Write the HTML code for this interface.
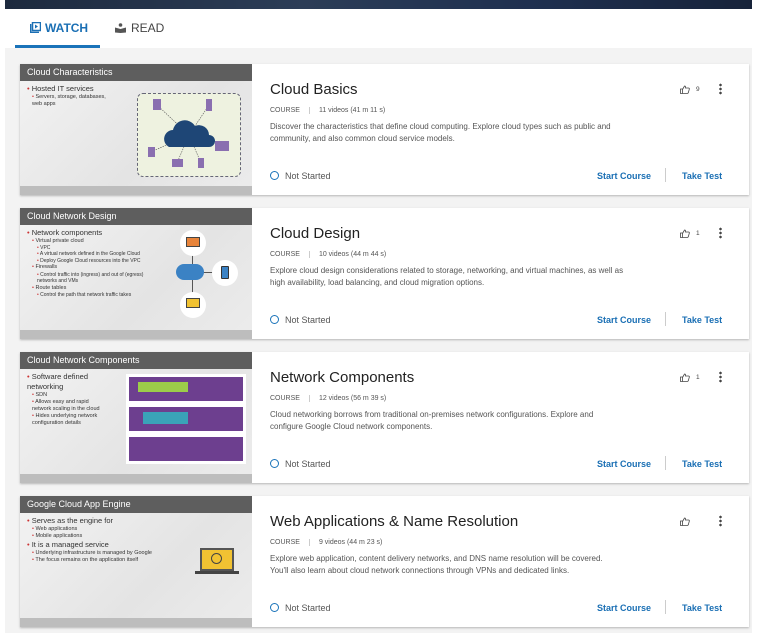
<!DOCTYPE html><html><head><style>
*{margin:0;padding:0;box-sizing:border-box}
body{width:762px;height:633px;background:#fff;font-family:"Liberation Sans",sans-serif;position:relative;overflow:hidden}
.top{position:absolute;left:5px;top:0;width:747px;height:9px;background:linear-gradient(90deg,#1d2a3e,#2c3d57 40%,#1f3050 70%,#17233a)}
.tab{position:absolute;top:21px;font-size:12px;font-weight:bold;}
.ul{position:absolute;left:15px;top:45px;width:85px;height:3px;background:#1a73b9}
.bg{position:absolute;left:5px;top:48px;width:747px;height:585px;background:#f3f3f3}
.card{position:absolute;left:20px;width:729px;height:131px;background:#fff;box-shadow:0 1px 2px rgba(0,0,0,.25)}
.th{position:absolute;left:0;top:0;width:232px;height:131px;background:linear-gradient(135deg,#f3f3f3,#e4e4e4 60%,#ececec);overflow:hidden}
.th .h{height:17px;background:#5e5e5e;color:#fff;font-size:9px;padding:3px 7px}
.th .f{position:absolute;bottom:0;left:0;width:100%;height:9px;background:#bdbdbd}
.th ul{list-style:none;font-size:6.5px;color:#333;padding:3px 7px;line-height:1.3}
.th li.a{font-size:7.5px}
.th li.b{padding-left:5px;font-size:5.5px}
.th li.c{padding-left:10px;font-size:5px}
.th li:before{content:"• ";color:#c33}
.t{position:absolute;left:250px;top:17px;font-size:15px;color:#222}
.m{position:absolute;left:250px;top:43px;font-size:7px;color:#555}
.m span{border-left:1px solid #ccc;margin-left:9px;padding-left:9px}
.d{position:absolute;left:250px;top:57px;font-size:8px;line-height:12px;color:#555;width:420px}
.ns{position:absolute;left:250px;top:107px;font-size:9px;color:#555}
.ns:before{content:"";display:inline-block;width:7px;height:7px;border:1.5px solid #1a73b9;border-radius:50%;margin-right:6px;vertical-align:-1px}
.sc{position:absolute;left:577px;top:107px;font-size:9px;font-weight:bold;color:#1a6fb4}
.sep{position:absolute;left:645px;top:104px;width:1px;height:14px;background:#ccc}
.tt{position:absolute;left:662px;top:107px;font-size:9px;font-weight:bold;color:#1a6fb4}
.lk{position:absolute;left:660px;top:21px;font-size:6.5px;color:#444;display:flex;align-items:center;gap:6px}
.kb{position:absolute;left:699px;top:19px;width:3px;height:12px;background:radial-gradient(circle,#444 1.2px,transparent 1.4px) 0 0/3px 4px}
</style></head><body>
<div class="top"></div>
<div class="tab" style="left:30px;color:#1a6fb4"><svg width="11" height="11" viewBox="0 0 11 11" style="vertical-align:-1px;margin-right:4px"><rect x="2.5" y="0.5" width="8" height="8" fill="none" stroke="#1a6fb4" stroke-width="1.5"/><path d="M0.7 2v8.3h8.3" fill="none" stroke="#1a6fb4" stroke-width="1.4"/><path d="M5 2.5v4l3-2z" fill="#1a6fb4"/></svg>WATCH</div>
<div class="tab" style="left:115px;color:#444;font-weight:normal"><svg width="11" height="10" viewBox="0 0 11 10" style="vertical-align:-1px;margin-right:5px"><circle cx="5.5" cy="2" r="1.8" fill="#555"/><path d="M0 4.5l5.5 1.5 5.5-1.5v5l-5.5 0.5-5.5-0.5z" fill="#555"/></svg>READ</div>
<div class="ul"></div>
<div class="bg"></div>

<div class="card" style="top:64px">
<div class="th"><div class="h">Cloud Characteristics</div><ul><li class="a">Hosted IT services</li><li class="b">Servers, storage, databases,<br>web apps</li></ul>
<div style="position:absolute;left:117px;top:29px;width:104px;height:84px;background:#eef2e0;border:1px dashed #667;border-radius:6px"></div>
<svg style="position:absolute;left:117px;top:29px" width="104" height="84"><g stroke="#555" stroke-width=".6" stroke-dasharray="1.5 1"><path d="M52 42L20 12M52 42L72 12M52 42L16 58M52 42L84 52M52 42L40 70M52 42L64 70"/></g><g fill="#8a6fb0"><rect x="16" y="6" width="8" height="11"/><rect x="69" y="6" width="6" height="12"/><rect x="11" y="54" width="7" height="10"/><rect x="78" y="48" width="14" height="10"/><rect x="35" y="66" width="11" height="8"/><rect x="61" y="65" width="6" height="10"/></g><path d="M32 54a9 9 0 0 1 4-17a12 12 0 0 1 22-4a10 10 0 0 1 14 9a6 6 0 0 1 0 12z" fill="#1e4676"/></svg>
<div class="f"></div></div>
<div class="t">Cloud Basics</div><div class="m">COURSE<span>11 videos (41 m 11 s)</span></div>
<div class="d">Discover the characteristics that define cloud computing. Explore cloud types such as public and<br>community, and also common cloud service models.</div>
<div class="ns">Not Started</div><div class="sc">Start Course</div><div class="sep"></div><div class="tt">Take Test</div>
<div class="lk"><svg width="10" height="9" viewBox="0 0 10 9"><path d="M0.5 4h2v4.5h-2zM2.5 4.5l2-3.5c1 0 1.3 .7 1 2h3c.7 0 1 .6.8 1.2l-1 3.5c-.2.5-.5.8-1 .8H2.5" fill="none" stroke="#444" stroke-width=".8"/></svg>9</div><div class="kb"></div></div>

<div class="card" style="top:208px">
<div class="th"><div class="h">Cloud Network Design</div><ul><li class="a">Network components</li><li class="b">Virtual private cloud</li><li class="c">VPC</li><li class="c">A virtual network defined in the Google Cloud</li><li class="c">Deploy Google Cloud resources into the VPC</li><li class="b">Firewalls</li><li class="c">Control traffic into (ingress) and out of (egress)<br>networks and VMs</li><li class="b">Route tables</li><li class="c">Control the path that network traffic takes</li></ul>
<div style="position:absolute;left:172px;top:35px;width:1px;height:60px;background:#555"></div>
<div style="position:absolute;left:172px;top:64px;width:30px;height:1px;background:#555"></div>
<div style="position:absolute;left:160px;top:22px;width:26px;height:26px;background:#fff;border-radius:50%"></div>
<div style="position:absolute;left:166px;top:29px;width:14px;height:10px;background:#e8843a;border:1px solid #444"></div>
<div style="position:absolute;left:192px;top:52px;width:26px;height:26px;background:#fff;border-radius:50%"></div>
<div style="position:absolute;left:201px;top:58px;width:8px;height:13px;background:#3b82c4;border:1.5px solid #333;border-radius:1px"></div>
<div style="position:absolute;left:160px;top:84px;width:26px;height:26px;background:#fff;border-radius:50%"></div>
<div style="position:absolute;left:166px;top:90px;width:14px;height:10px;background:#f1c232;border:1px solid #444"></div>
<div style="position:absolute;left:156px;top:56px;width:28px;height:16px;background:#3b82c4;border-radius:8px"></div>
<div class="f"></div></div>
<div class="t">Cloud Design</div><div class="m">COURSE<span>10 videos (44 m 44 s)</span></div>
<div class="d">Explore cloud design considerations related to storage, networking, and virtual machines, as well as<br>high availability, load balancing, and cloud migration options.</div>
<div class="ns">Not Started</div><div class="sc">Start Course</div><div class="sep"></div><div class="tt">Take Test</div>
<div class="lk"><svg width="10" height="9" viewBox="0 0 10 9"><path d="M0.5 4h2v4.5h-2zM2.5 4.5l2-3.5c1 0 1.3 .7 1 2h3c.7 0 1 .6.8 1.2l-1 3.5c-.2.5-.5.8-1 .8H2.5" fill="none" stroke="#444" stroke-width=".8"/></svg>1</div><div class="kb"></div></div>

<div class="card" style="top:352px">
<div class="th"><div class="h">Cloud Network Components</div><ul><li class="a">Software defined<br>networking</li><li class="b">SDN</li><li class="b">Allows easy and rapid<br>network scaling in the cloud</li><li class="b">Hides underlying network<br>configuration details</li></ul>
<div style="position:absolute;left:106px;top:22px;width:120px;height:90px;background:#fff"></div>
<div style="position:absolute;left:109px;top:25px;width:114px;height:24px;background:#6d3f8f"></div>
<div style="position:absolute;left:118px;top:30px;width:50px;height:10px;background:#9ccc4a"></div>
<div style="position:absolute;left:109px;top:55px;width:114px;height:24px;background:#6d3f8f"></div>
<div style="position:absolute;left:123px;top:60px;width:45px;height:12px;background:#3aa3b8"></div>
<div style="position:absolute;left:109px;top:85px;width:114px;height:24px;background:#6d3f8f"></div>
<div class="f"></div></div>
<div class="t">Network Components</div><div class="m">COURSE<span>12 videos (56 m 39 s)</span></div>
<div class="d">Cloud networking borrows from traditional on-premises network configurations. Explore and<br>configure Google Cloud network components.</div>
<div class="ns">Not Started</div><div class="sc">Start Course</div><div class="sep"></div><div class="tt">Take Test</div>
<div class="lk"><svg width="10" height="9" viewBox="0 0 10 9"><path d="M0.5 4h2v4.5h-2zM2.5 4.5l2-3.5c1 0 1.3 .7 1 2h3c.7 0 1 .6.8 1.2l-1 3.5c-.2.5-.5.8-1 .8H2.5" fill="none" stroke="#444" stroke-width=".8"/></svg>1</div><div class="kb"></div></div>

<div class="card" style="top:496px">
<div class="th"><div class="h">Google Cloud App Engine</div><ul><li class="a">Serves as the engine for</li><li class="b">Web applications</li><li class="b">Mobile applications</li><li class="a">It is a managed service</li><li class="b">Underlying infrastructure is managed by Google</li><li class="b">The focus remains on the application itself</li></ul>
<div style="position:absolute;left:180px;top:52px;width:34px;height:23px;background:#f1c232;border:2px solid #555"></div>
<div style="position:absolute;left:191px;top:57px;width:11px;height:11px;border:1.5px solid #444;border-radius:50%"></div>
<div style="position:absolute;left:175px;top:75px;width:44px;height:3px;background:#444"></div>
<div class="f"></div></div>
<div class="t">Web Applications &amp; Name Resolution</div><div class="m">COURSE<span>9 videos (44 m 23 s)</span></div>
<div class="d">Explore web application, content delivery networks, and DNS name resolution will be covered.<br>You'll also learn about cloud network connections through VPNs and dedicated links.</div>
<div class="ns">Not Started</div><div class="sc">Start Course</div><div class="sep"></div><div class="tt">Take Test</div>
<div class="lk"><svg width="10" height="9" viewBox="0 0 10 9"><path d="M0.5 4h2v4.5h-2zM2.5 4.5l2-3.5c1 0 1.3 .7 1 2h3c.7 0 1 .6.8 1.2l-1 3.5c-.2.5-.5.8-1 .8H2.5" fill="none" stroke="#444" stroke-width=".8"/></svg></div><div class="kb"></div></div>
</body></html>
